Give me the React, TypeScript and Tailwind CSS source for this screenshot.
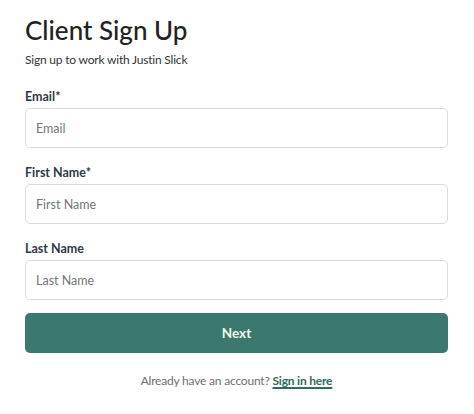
export default function App() {
  return (
    <div
      className="min-h-[414px] w-[474px] bg-white px-[25px] pt-[12px] text-[#222] [font-variant-ligatures:none]"
      style={{ fontFamily: 'Lato, "Noto Sans", sans-serif' }}
    >
      <h1 className="text-[26px] font-medium leading-[36px] text-[#222]">Client Sign Up</h1>
      <p className="mt-[2px] text-[12px] leading-[20px] tracking-[-0.2px] text-[#333]">
        Sign up to work with Justin Slick
      </p>

      <form className="mt-[17px] flex w-[423px] flex-col" onSubmit={e => e.preventDefault()}>
        <Field label="Email*" placeholder="Email" />
        <Field label="First Name*" placeholder="First Name" />
        <Field label="Last Name" placeholder="Last Name" last />

        <button
          type="submit"
          className="mt-[13px] h-[40px] w-full rounded-[5px] bg-[#3b786d] text-[13.5px] font-bold text-[#f4f7ee]"
        >
          Next
        </button>
      </form>

      <p className="mt-[18px] w-[423px] text-center text-[12px] leading-[20px] tracking-[-0.2px] text-[#6b7072]">
        Already have an account?{' '}
        <a href="#" className="font-bold text-[#2f6b60] underline decoration-[1.5px] underline-offset-2">
          Sign in here
        </a>
      </p>
    </div>
  )
}

function Field({ label, placeholder, last }: { label: string; placeholder: string; last?: boolean }) {
  return (
    <div className={last ? '' : 'mb-[15px]'}>
      <label className="block text-[12.5px] font-bold leading-[20px] text-[#2f3a48]">{label}</label>
      <input
        placeholder={placeholder}
        className="mt-px h-[40px] w-full rounded-[5px] border border-[#d9dbde] bg-white px-[10px] text-[12.5px] text-[#333] outline-none placeholder:text-[#727678]"
      />
    </div>
  )
}
